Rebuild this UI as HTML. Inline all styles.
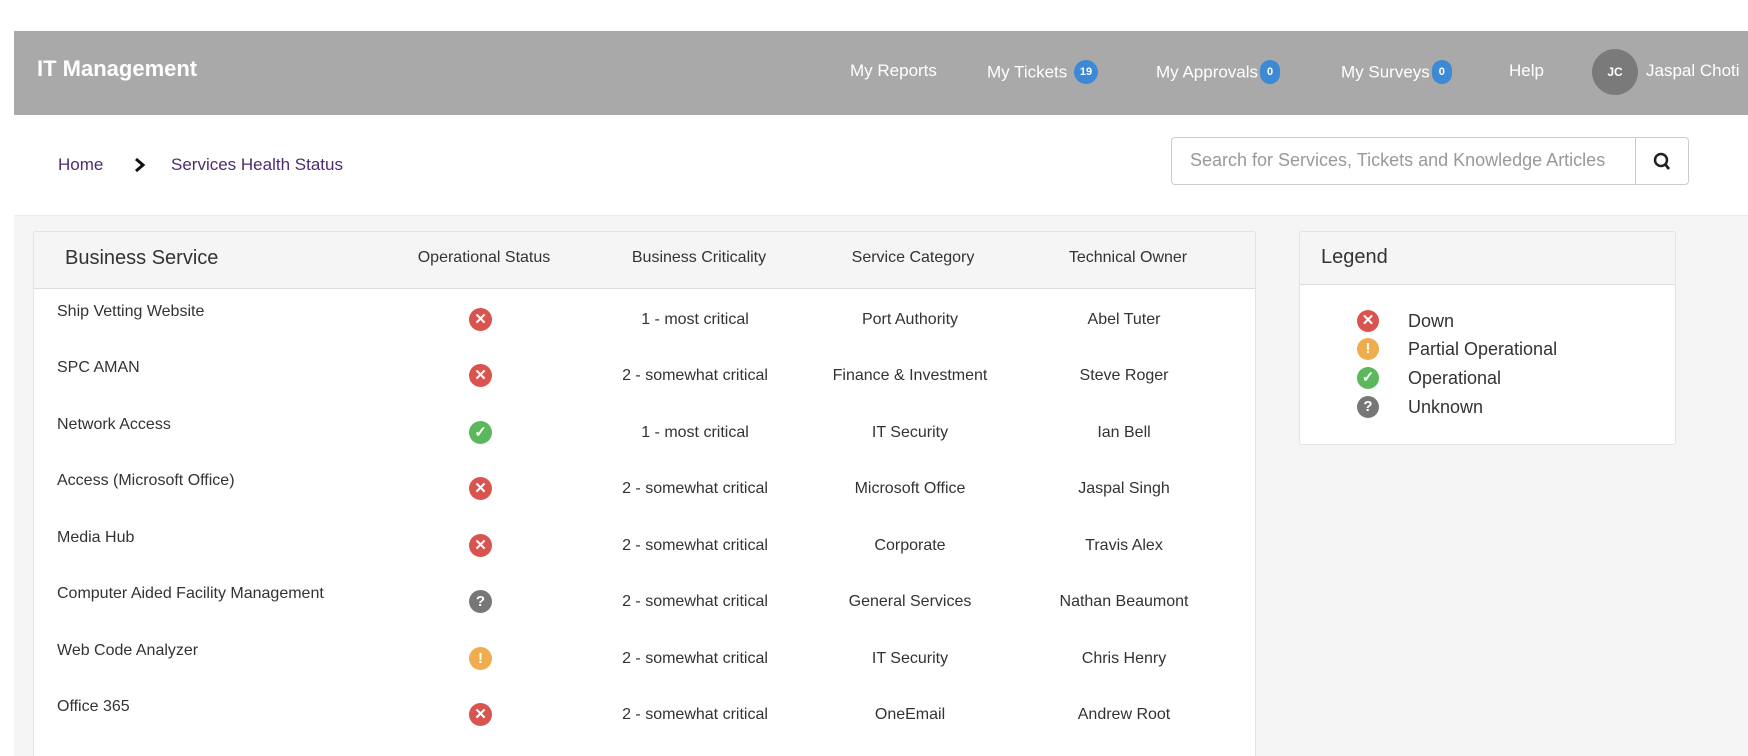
<!DOCTYPE html>
<html style="overflow:hidden;width:1748px;height:756px"><head><meta charset="utf-8"><style>
*{margin:0;padding:0;box-sizing:border-box}
body{width:1748px;height:756px;background:#fff;font-family:"Liberation Sans",sans-serif;color:#333;position:relative;overflow:hidden}
.a{position:absolute;white-space:nowrap}
.hdr{left:14px;top:31px;width:1734px;height:84px;background:#a9a9a9}
.nav{color:#fff;font-size:17px;top:61px}
.badge{display:inline-block;background:#3c8ad6;color:#fff;border-radius:13px;font-size:11px;font-weight:bold;width:24px;height:24px;line-height:24px;text-align:center;vertical-align:middle;position:relative;top:-1px;margin-left:2px}
.crumb{color:#4d2c6e;font-size:17px;top:155px}
.grey{left:14px;top:215px;width:1734px;height:541px;background:#f5f5f5;border-top:1px solid #ececec}
.panel{background:#fff;border:1px solid #e3e3e3;border-radius:3px}
.th{font-size:16px;color:#333;top:249px;transform:translateX(-50%)}
.cell{font-size:16px;color:#333;transform:translateX(-50%)}
.name{font-size:16px;color:#333;left:57px}
.ic{position:absolute;width:23px;height:23px;border-radius:50%;color:#fff;font-weight:bold;font-size:15px;line-height:23px;text-align:center}
.r{background:#d9534f}.o{background:#f0ad4e}.g{background:#5cb85c}.u{background:#777}
.lg{font-size:18px;color:#333;left:1408px}
</style></head><body>
<div class="a hdr"></div>
<div class="a" style="left:37px;top:56px;color:#fff;font-size:22px;font-weight:bold">IT Management</div>
<div class="a nav" style="left:850px">My Reports</div>
<div class="a nav" style="left:987px">My Tickets <span class="badge">19</span></div>
<div class="a nav" style="left:1156px">My Approvals<span class="badge" style="width:20px">0</span></div>
<div class="a nav" style="left:1341px">My Surveys<span class="badge" style="width:20px">0</span></div>
<div class="a nav" style="left:1509px">Help</div>
<div class="a" style="left:1592px;top:49px;width:46px;height:46px;border-radius:50%;background:#7a7a7a;color:#fff;font-size:12px;font-weight:bold;text-align:center;line-height:46px">JC</div>
<div class="a nav" style="left:1646px">Jaspal Choti</div>

<div class="a crumb" style="left:58px">Home</div>
<svg class="a" style="left:134px;top:157px" width="12" height="16"><path d="M2 2 L9 8 L2 14" stroke="#111" stroke-width="3" fill="none"/></svg>
<div class="a crumb" style="left:171px">Services Health Status</div>

<div class="a" style="left:1171px;top:137px;width:518px;height:48px;border:1px solid #ccc;border-radius:4px;background:#fff"></div>
<div class="a" style="left:1635px;top:137px;width:1px;height:48px;background:#ccc"></div>
<div class="a" style="left:1190px;top:150px;font-size:18px;color:#999;width:438px;overflow:hidden">Search for Services, Tickets and Knowledge Articles</div>
<svg class="a" style="left:1653px;top:152px" width="18" height="20"><circle cx="8" cy="8" r="6" stroke="#222" stroke-width="2.5" fill="none"/><path d="M12 12 L16 17" stroke="#222" stroke-width="2.8"/></svg>

<div class="a grey"></div>
<div class="a panel" style="left:33px;top:231px;width:1223px;height:540px"></div>
<div class="a" style="left:34px;top:232px;width:1221px;height:57px;background:#f5f5f5;border-bottom:1px solid #ddd"></div>
<div class="a" style="left:65px;top:247px;font-size:20px;color:#333">Business Service</div>
<div class="a th" style="left:484px">Operational Status</div>
<div class="a th" style="left:699px">Business Criticality</div>
<div class="a th" style="left:913px">Service Category</div>
<div class="a th" style="left:1128px">Technical Owner</div>

<div class="a name" style="top:303px">Ship Vetting Website</div>
<div class="ic r" style="left:469px;top:308px">✕</div>
<div class="a cell" style="left:695px;top:311px">1 - most critical</div>
<div class="a cell" style="left:910px;top:311px">Port Authority</div>
<div class="a cell" style="left:1124px;top:311px">Abel Tuter</div>

<div class="a name" style="top:359px">SPC AMAN</div>
<div class="ic r" style="left:469px;top:364px">✕</div>
<div class="a cell" style="left:695px;top:367px">2 - somewhat critical</div>
<div class="a cell" style="left:910px;top:367px">Finance &amp; Investment</div>
<div class="a cell" style="left:1124px;top:367px">Steve Roger</div>

<div class="a name" style="top:416px">Network Access</div>
<div class="ic g" style="left:469px;top:421px">✓</div>
<div class="a cell" style="left:695px;top:424px">1 - most critical</div>
<div class="a cell" style="left:910px;top:424px">IT Security</div>
<div class="a cell" style="left:1124px;top:424px">Ian Bell</div>

<div class="a name" style="top:472px">Access (Microsoft Office)</div>
<div class="ic r" style="left:469px;top:477px">✕</div>
<div class="a cell" style="left:695px;top:480px">2 - somewhat critical</div>
<div class="a cell" style="left:910px;top:480px">Microsoft Office</div>
<div class="a cell" style="left:1124px;top:480px">Jaspal Singh</div>

<div class="a name" style="top:529px">Media Hub</div>
<div class="ic r" style="left:469px;top:534px">✕</div>
<div class="a cell" style="left:695px;top:537px">2 - somewhat critical</div>
<div class="a cell" style="left:910px;top:537px">Corporate</div>
<div class="a cell" style="left:1124px;top:537px">Travis Alex</div>

<div class="a name" style="top:585px">Computer Aided Facility Management</div>
<div class="ic u" style="left:469px;top:590px">?</div>
<div class="a cell" style="left:695px;top:593px">2 - somewhat critical</div>
<div class="a cell" style="left:910px;top:593px">General Services</div>
<div class="a cell" style="left:1124px;top:593px">Nathan Beaumont</div>

<div class="a name" style="top:642px">Web Code Analyzer</div>
<div class="ic o" style="left:469px;top:647px">!</div>
<div class="a cell" style="left:695px;top:650px">2 - somewhat critical</div>
<div class="a cell" style="left:910px;top:650px">IT Security</div>
<div class="a cell" style="left:1124px;top:650px">Chris Henry</div>

<div class="a name" style="top:698px">Office 365</div>
<div class="ic r" style="left:469px;top:703px">✕</div>
<div class="a cell" style="left:695px;top:706px">2 - somewhat critical</div>
<div class="a cell" style="left:910px;top:706px">OneEmail</div>
<div class="a cell" style="left:1124px;top:706px">Andrew Root</div>

<div class="a panel" style="left:1299px;top:231px;width:377px;height:214px"></div>
<div class="a" style="left:1300px;top:232px;width:375px;height:53px;background:#f5f5f5;border-bottom:1px solid #ddd"></div>
<div class="a" style="left:1321px;top:246px;font-size:20px;color:#333">Legend</div>
<div class="ic r" style="left:1357px;top:310px;width:22px;height:22px;line-height:22px">✕</div>
<div class="a lg" style="top:311px">Down</div>
<div class="ic o" style="left:1357px;top:338px;width:22px;height:22px;line-height:22px">!</div>
<div class="a lg" style="top:339px">Partial Operational</div>
<div class="ic g" style="left:1357px;top:367px;width:22px;height:22px;line-height:22px">✓</div>
<div class="a lg" style="top:368px">Operational</div>
<div class="ic u" style="left:1357px;top:396px;width:22px;height:22px;line-height:22px">?</div>
<div class="a lg" style="top:397px">Unknown</div>
</body></html>
